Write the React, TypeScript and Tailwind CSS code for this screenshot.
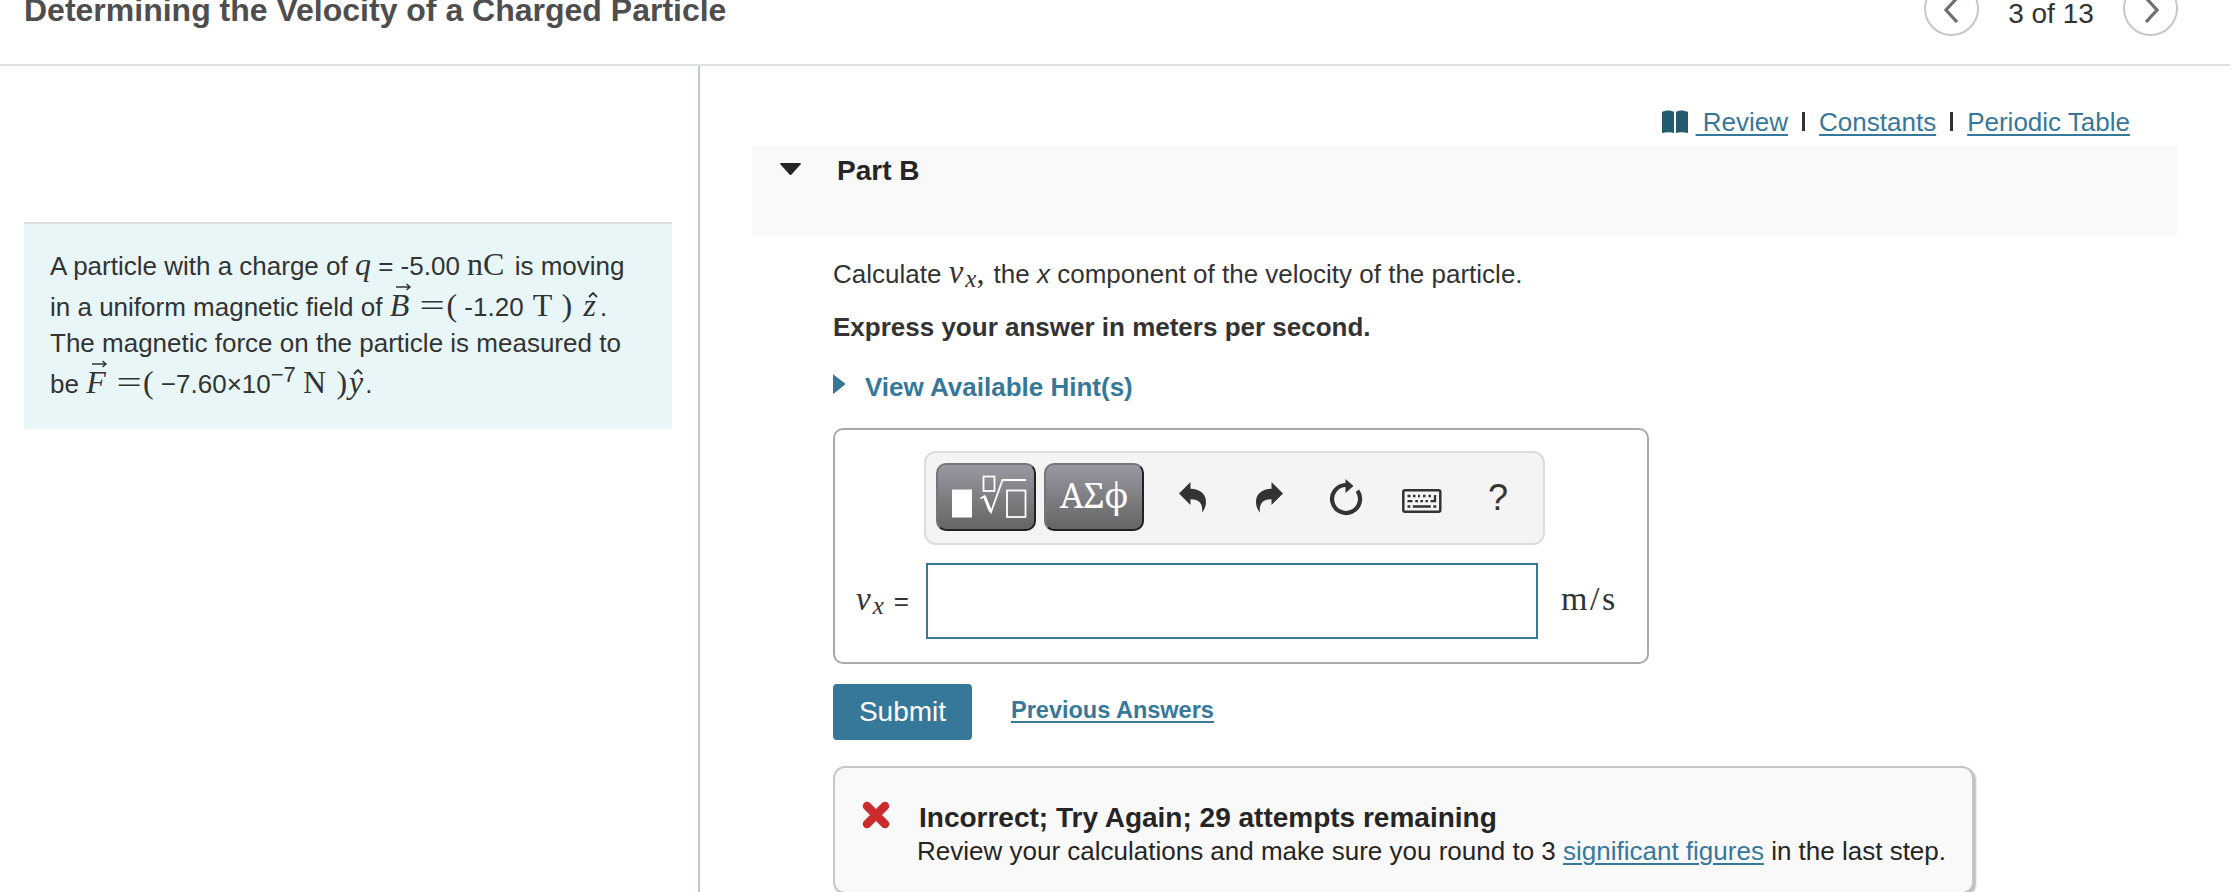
import type { ReactNode } from 'react';
import clsx from 'clsx';

function Arrow({ className }: { className?: string }) {
  return (
    <svg viewBox="0 0 30 32" className={clsx('h-8 w-[30px] fill-[#333]', className)}>
      <path d="M1 12.5 12.5 1v6.8C22 8 28 13 28 21c0 4-1.700 8-4 10.500C25 24 22.500 18 12.500 18.200V24Z" />
    </svg>
  );
}

function Reset() {
  return (
    <svg viewBox="0 0 34 38" className="h-[38px] w-[34px]">
      <path d="M17 7a14 14 0 1 0 11.400 5.800" fill="none" stroke="#333" strokeWidth="4.200" />
      <path d="M16.500 1 24.500 8 16.500 15Z" fill="#333" />
    </svg>
  );
}

function Keyboard() {
  return (
    <svg viewBox="0 0 40 24" className="h-6 w-10">
      <rect x="1.300" y="1.300" width="37" height="21.400" rx="1.800" fill="none" stroke="#333" strokeWidth="2.500" />
      <path d="M5.500 7h3m2.500 0h2.500m2.500 0H18m3 0h2.500m3 0H29M5.500 12.200h5m2.800 0H16m2.300 0H21m2.500 0H26m-20.500 5.300h2.800m2.500 0h18m2.500 0h3" fill="none" stroke="#333" strokeWidth="2.300" />
      <path d="M33 6v6.200h-4.500" fill="none" stroke="#333" strokeWidth="2.300" />
    </svg>
  );
}

function Radical() {
  return (
    <svg viewBox="0 0 76 44" className="ml-1.5 h-11 w-[76px] shrink-0" fill="none" stroke="#fff">
      <rect x="1" y="14.500" width="20" height="28" fill="#fff" stroke="none" />
      <rect x="32.500" y="1.500" width="11" height="14.500" strokeWidth="1.800" />
      <path d="m29.500 23.500 4-2.500 6.500 16L51.500 5H75" strokeWidth="1.800" />
      <path d="m33.500 21.500 6 15" strokeWidth="3" />
      <rect x="56" y="15.500" width="18.500" height="26.500" strokeWidth="1.800" />
    </svg>
  );
}

/** Math italic letter, optionally with an arrow or a hat over it. */
function Sym({ children, over }: { children: ReactNode; over?: 'vec' | 'hat' }) {
  return (
    <span className="relative inline-block font-['Liberation_Serif',serif] text-[32px] leading-none italic">
      {children}
      {over === 'vec' && (
        <svg viewBox="0 0 16 8" className="absolute -top-1.5 left-1.5 h-2 w-4" fill="none" stroke="#333" strokeWidth="1.500">
          <path d="M0 4h14M10.500 1 14 4l-3.500 3" />
        </svg>
      )}
      {over === 'hat' && (
        <svg viewBox="0 0 10 6" className="absolute top-[3px] left-1 h-1.5 w-2.5" fill="none" stroke="#333" strokeWidth="1.800">
          <path d="m1 5 4-4 4 4" />
        </svg>
      )}
    </span>
  );
}

function Rm({ children, className }: { children: ReactNode; className?: string }) {
  return <span className={clsx("font-['Liberation_Serif',serif] text-[32px] leading-none", className)}>{children}</span>;
}

function EqOpen() {
  return (
    <>
      <Rm className="mr-[5px] ml-[7px] inline-block scale-x-140">=</Rm>
      <Rm>(</Rm>
    </>
  );
}

function Vx() {
  return (
    <span className="font-['Liberation_Serif',serif] leading-none italic">
      <span className="mr-0.5 text-[33px]">v</span>
      <span className="relative top-1 text-[25px]">x</span>
    </span>
  );
}

function PageButton({ d }: { d: string }) {
  return (
    <button type="button" className="flex size-[55px] items-center justify-center rounded-full border-2 border-[#c7c7c7]">
      <svg viewBox="0 0 16 26" className="mt-0.5 h-[26px] w-4" fill="none" stroke="#6a7070" strokeWidth="3.200">
        <path d={d} />
      </svg>
    </button>
  );
}

const toolButton =
  'flex h-[68px] w-[100px] items-center justify-center rounded-[10px] border-2 border-t-[#767676] border-r-[#212121] border-b-[#212121] border-l-[#767676] bg-linear-to-b from-[#9a98a2] to-[#656565]';
const link = 'text-[#36789a] underline decoration-2 underline-offset-[3px]';

export default function App() {
  return (
    <div className="flex h-[892px] w-[2236px] flex-col overflow-hidden bg-white font-['Liberation_Sans',sans-serif] text-[26px] leading-[36px] text-[#333]">
      <header className="flex h-[66px] w-[2230px] shrink-0 items-start justify-between border-b-2 border-[#e0e0e0] pr-[52px] pl-6">
        <h1 className="-mt-2 text-[32px] font-bold text-[#4e4e4e]">Determining the Velocity of a Charged Particle</h1>
        <div className="-mt-[19px] flex items-center">
          <PageButton d="M13 1 2 13l11 12" />
          <span className="w-[144px] pt-[11px] text-center text-[28px]">3 of 13</span>
          <PageButton d="m3 1 11 12L3 25" />
        </div>
      </header>

      <div className="flex min-h-0 flex-1">
        <aside className="w-[700px] shrink-0 border-r-2 border-[#bcc9dc] pt-[156px] pl-6">
          <div className="h-[207px] w-[648px] border-t-2 border-[#dcdcdc] bg-[#e8f6f7] pt-6 pl-[26px] whitespace-nowrap">
            <p className="h-[41px]">A particle with a charge of <Sym>q</Sym> = -5.00 <Rm className="mr-[3px]">nC</Rm> is moving</p>
            <p className="h-[36px]">
              in a uniform magnetic field of <Sym over="vec">B</Sym> <EqOpen /> -1.20 <Rm className="ml-0.5">T</Rm> <Rm className="ml-0.5">)</Rm> <span className="mr-1 ml-1"><Sym over="hat">z</Sym></span>.
            </p>
            <p className="h-[41px]">The magnetic force on the particle is measured to</p>
            <p>
              be <Sym over="vec">F</Sym> <EqOpen /> −7.60×10<sup className="text-[22px]">−7</sup> <Rm>N</Rm> <Rm className="mr-0.5 ml-[3px]">)</Rm><span className="mr-0.5"><Sym over="hat">y</Sym></span>.
            </p>
          </div>
        </aside>

        <main className="flex flex-1 flex-col pl-[52px]">
          <div className="flex h-20 shrink-0 items-end justify-end pr-[106px] pb-1.5">
            <svg viewBox="0 0 26 24" className="mr-2 mb-1.5 h-6 w-[26px] fill-[#235c70]">
              <path d="M0 2c4-2 9-2 12 0v21c-3-1-8-1-12 0ZM14 2c3-2 8-2 12 0v21c-4-1-9-1-12 0Z" />
            </svg>
            <a className={clsx(link, 'whitespace-pre')}> Review</a>
            <span className="mr-[14px] ml-[14px] mb-[9px] h-[19px] w-[3px] bg-[#333]" />
            <a className={link}>Constants</a>
            <span className="mr-[14px] ml-[14px] mb-[9px] h-[19px] w-[3px] bg-[#333]" />
            <a className={link}>Periodic Table</a>
          </div>

          <section className="flex h-[90px] w-[1426px] shrink-0 items-start bg-[#f9f9f9] pt-1.5 pl-7">
            <svg viewBox="0 0 21 12" className="mt-[11px] h-3 w-[21px] fill-[#252525]">
              <path d="M1 0h19q1.500 0 .5 1.500L11.500 11.500q-1 1-2 0L.5 1.500Q-.5 0 1 0Z" />
            </svg>
            <h2 className="mt-px ml-9 text-[28px] font-bold text-[#252525]">Part B</h2>
          </section>

          <div className="flex flex-col items-start pl-[81px]">
            <p className="mt-5 h-[36px] whitespace-nowrap">Calculate <Vx /><Rm className="mr-0.5">,</Rm> the <i>x</i> component of the velocity of the particle.</p>
            <p className="mt-[17px] font-bold">Express your answer in meters per second.</p>
            <div className="mt-6 flex font-bold text-[#36789a]">
              <svg viewBox="0 0 12 20" className="mt-[5px] mr-5 h-5 w-3 fill-current">
                <path d="M0 1q0-1.500 1 0l10.500 8q1 1 0 2L1 19.500q-1 .5-1-.5Z" />
              </svg>
              View Available Hint(s)
            </div>

            <div className="mt-[23px] h-[236px] w-[816px] rounded-[10px] border-2 border-[#a9a9a9]">
              <div className="mt-[21px] ml-[89px] flex h-[94px] w-[621px] items-center rounded-xl border-2 border-[#dcdcdc] bg-[#f4f4f4] pb-[3px] pl-2.5">
                <button type="button" className={toolButton}><Radical /></button>
                <button type="button" className={clsx(toolButton, "ml-2 pb-1 font-['Noto_Serif','Liberation_Serif',serif] text-[34px] text-white")}>ΑΣϕ</button>
                <Arrow className="ml-[34px]" />
                <Arrow className="ml-[46px] -scale-x-100" />
                <span className="ml-[45px]"><Reset /></span>
                <span className="mt-2 ml-[39px]"><Keyboard /></span>
                <span className="mt-0.5 ml-[46px] text-[36px]">?</span>
              </div>
              <div className="mt-[18px] flex items-center">
                <span className="w-[91px] pl-[21px] whitespace-nowrap"><Vx /><span className="ml-2.5">=</span></span>
                <input className="h-[76px] w-[612px] border-2 border-[#36789a] bg-white outline-none" />
                <span className="mb-1 ml-[23px] font-['Liberation_Serif',serif] text-[34px] leading-none tracking-[2.5px]">m/s</span>
              </div>
            </div>

            <div className="mt-5 flex items-start">
              <button type="button" className="h-14 w-[139px] rounded bg-[#36789a] text-[28px] text-white">Submit</button>
              <a className={clsx(link, 'mt-2 ml-[39px] text-[23.5px] font-bold')}>Previous Answers</a>
            </div>

            <div className="mt-[26px] flex h-[128px] w-[1141px] rounded-xl border-2 border-[#c7c7c7] bg-[#f9f9f9] pt-[33px] pl-[27px] text-[#252525] shadow-[2px_2px_2px_#bbb]">
              <svg viewBox="0 0 28 28" className="size-7" stroke="#cb2b2d" strokeWidth="8.500" strokeLinecap="round">
                <path d="m5 5 18 18M23 5 5 23" />
              </svg>
              <div className="ml-[27px] whitespace-nowrap">
                <p className="ml-0.5 text-[28px] leading-[34px] font-bold">Incorrect; Try Again; 29 attempts remaining</p>
                <p className="leading-[32px]">Review your calculations and make sure you round to 3 <a className={link}>significant figures</a> in the last step.</p>
              </div>
            </div>
          </div>
        </main>
      </div>
    </div>
  );
}
